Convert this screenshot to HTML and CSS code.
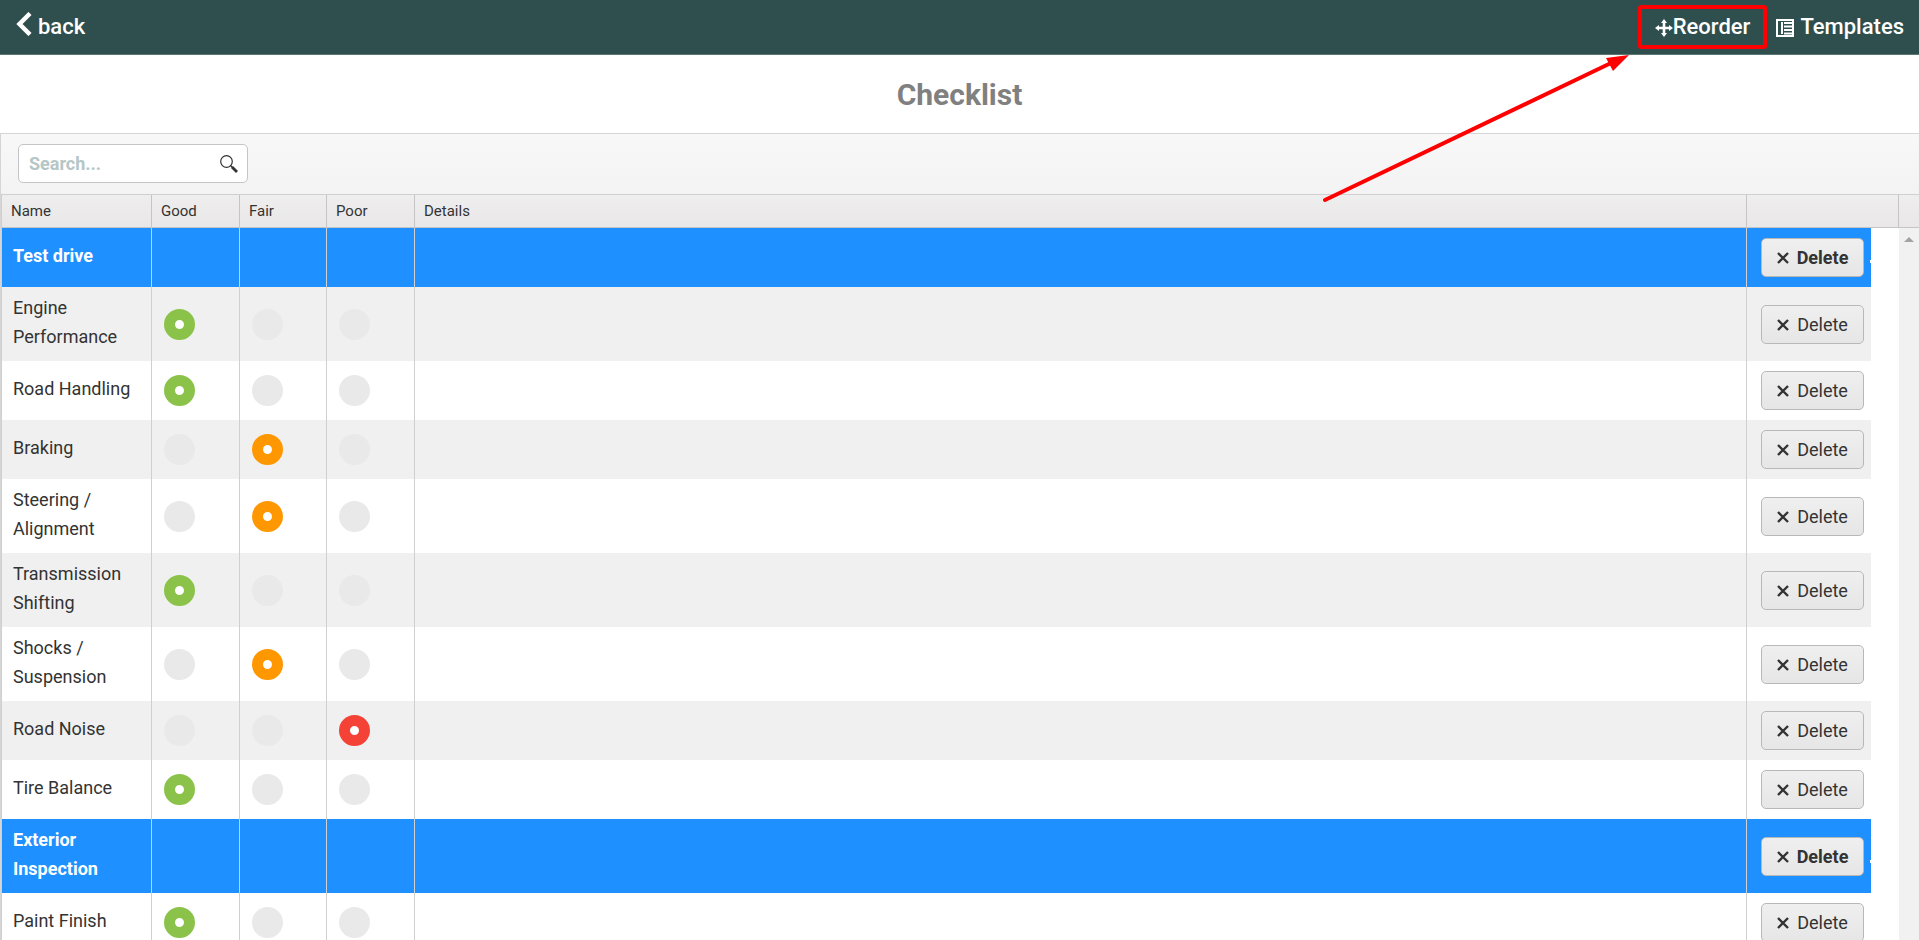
FILE: index.html
```html
<!DOCTYPE html>
<html lang="en">
<head>
    <meta charset="UTF-8">
    <meta name="viewport" content="width=device-width, initial-scale=1.0">
    <title>Checklist</title>
    <link rel="stylesheet" href="styles.css">
</head>
<body>
    <svg class="symbols" aria-hidden="true">
        <symbol id="icon-x" viewBox="0 0 12 12">
            <path d="M1 1 L11 11 M11 1 L1 11" fill="none" stroke="currentColor" stroke-width="2.4"/>
        </symbol>
    </svg>

    <header class="top-bar">
        <a href="#" class="top-link">
            <svg class="back-icon" viewBox="0 0 15 24" aria-hidden="true">
                <path d="M13.5 1.5 L3 12 L13.5 22.5" fill="none" stroke="#fff" stroke-width="4.5"/>
            </svg>
            <span>back</span>
        </a>
        <nav class="top-actions">
            <a href="#" class="top-link reorder-link">
                <svg class="move-icon" viewBox="0 0 18 18" aria-hidden="true">
                    <path d="M9 0 L12 4 H10.3 V7.7 H14 V6 L18 9 L14 12 V10.3 H10.3 V14 H12 L9 18 L6 14 H7.7 V10.3 H4 V12 L0 9 L4 6 V7.7 H7.7 V4 H6 Z" fill="#fff"/>
                </svg>
                <span>Reorder</span>
            </a>
            <a href="#" class="top-link templates-link">
                <svg class="list-icon" viewBox="0 0 18 18" aria-hidden="true">
                    <path d="M1 1 H17 V17 H1 Z" fill="none" stroke="#fff" stroke-width="2"/>
                    <path d="M6 3 V15 M8 4 H16 M8 7.5 H16 M8 11 H16 M8 14.5 H16" fill="none" stroke="#fff" stroke-width="2"/>
                </svg>
                <span>Templates</span>
            </a>
        </nav>
        <svg class="arrow" viewBox="0 0 308 150" aria-hidden="true">
            <path d="M4 147 L290 10" fill="none" stroke="#f00" stroke-width="4" stroke-linecap="round"/>
            <path d="M308 2 L285 5 L292 18 Z" fill="#f00"/>
        </svg>
    </header>

    <h1>Checklist</h1>

    <main class="grid">
        <div class="toolbar">
            <div class="search-box">
                <input type="text" class="search" placeholder="Search..." aria-label="Search">
                <svg class="search-icon" viewBox="0 0 18 18" aria-hidden="true">
                    <circle cx="6.5" cy="6.5" r="5.8" fill="none" stroke="#333" stroke-width="1.2"/>
                    <path d="M10.5 10.5 L12.5 12.5" stroke="#333" stroke-width="1.5"/>
                    <path d="M12 12 L17 17" stroke="#333" stroke-width="2.8"/>
                </svg>
            </div>
        </div>

        <div class="grid-body">
            <table>
                <colgroup>
                    <col class="col-name">
                    <col class="col-rate">
                    <col class="col-fair">
                    <col class="col-rate">
                    <col>
                    <col class="col-actions">
                    <col class="col-space">
                </colgroup>
                <thead>
                    <tr>
                        <th>Name</th>
                        <th>Good</th>
                        <th>Fair</th>
                        <th>Poor</th>
                        <th>Details</th>
                        <th colspan="2"></th>
                    </tr>
                </thead>
                <tbody>
                    <tr class="group">
                        <td class="name">Test drive</td>
                        <td></td>
                        <td></td>
                        <td></td>
                        <td></td>
                        <td class="actions"><button type="button" class="delete-btn"><svg class="x-icon"><use href="#icon-x"/></svg>Delete</button></td>
                        <td class="space"></td>
                    </tr>
                    <tr class="alt">
                        <td class="name">Engine Performance</td>
                        <td><input type="radio" class="rate good" name="engine" aria-label="Good" checked></td>
                        <td><input type="radio" class="rate fair" name="engine" aria-label="Fair"></td>
                        <td><input type="radio" class="rate poor" name="engine" aria-label="Poor"></td>
                        <td></td>
                        <td class="actions"><button type="button" class="delete-btn"><svg class="x-icon"><use href="#icon-x"/></svg>Delete</button></td>
                        <td class="space"></td>
                    </tr>
                    <tr>
                        <td class="name">Road Handling</td>
                        <td><input type="radio" class="rate good" name="handling" aria-label="Good" checked></td>
                        <td><input type="radio" class="rate fair" name="handling" aria-label="Fair"></td>
                        <td><input type="radio" class="rate poor" name="handling" aria-label="Poor"></td>
                        <td></td>
                        <td class="actions"><button type="button" class="delete-btn"><svg class="x-icon"><use href="#icon-x"/></svg>Delete</button></td>
                        <td class="space"></td>
                    </tr>
                    <tr class="alt">
                        <td class="name">Braking</td>
                        <td><input type="radio" class="rate good" name="braking" aria-label="Good"></td>
                        <td><input type="radio" class="rate fair" name="braking" aria-label="Fair" checked></td>
                        <td><input type="radio" class="rate poor" name="braking" aria-label="Poor"></td>
                        <td></td>
                        <td class="actions"><button type="button" class="delete-btn"><svg class="x-icon"><use href="#icon-x"/></svg>Delete</button></td>
                        <td class="space"></td>
                    </tr>
                    <tr>
                        <td class="name">Steering / Alignment</td>
                        <td><input type="radio" class="rate good" name="steering" aria-label="Good"></td>
                        <td><input type="radio" class="rate fair" name="steering" aria-label="Fair" checked></td>
                        <td><input type="radio" class="rate poor" name="steering" aria-label="Poor"></td>
                        <td></td>
                        <td class="actions"><button type="button" class="delete-btn"><svg class="x-icon"><use href="#icon-x"/></svg>Delete</button></td>
                        <td class="space"></td>
                    </tr>
                    <tr class="alt">
                        <td class="name">Transmission Shifting</td>
                        <td><input type="radio" class="rate good" name="transmission" aria-label="Good" checked></td>
                        <td><input type="radio" class="rate fair" name="transmission" aria-label="Fair"></td>
                        <td><input type="radio" class="rate poor" name="transmission" aria-label="Poor"></td>
                        <td></td>
                        <td class="actions"><button type="button" class="delete-btn"><svg class="x-icon"><use href="#icon-x"/></svg>Delete</button></td>
                        <td class="space"></td>
                    </tr>
                    <tr>
                        <td class="name">Shocks / Suspension</td>
                        <td><input type="radio" class="rate good" name="shocks" aria-label="Good"></td>
                        <td><input type="radio" class="rate fair" name="shocks" aria-label="Fair" checked></td>
                        <td><input type="radio" class="rate poor" name="shocks" aria-label="Poor"></td>
                        <td></td>
                        <td class="actions"><button type="button" class="delete-btn"><svg class="x-icon"><use href="#icon-x"/></svg>Delete</button></td>
                        <td class="space"></td>
                    </tr>
                    <tr class="alt">
                        <td class="name">Road Noise</td>
                        <td><input type="radio" class="rate good" name="noise" aria-label="Good"></td>
                        <td><input type="radio" class="rate fair" name="noise" aria-label="Fair"></td>
                        <td><input type="radio" class="rate poor" name="noise" aria-label="Poor" checked></td>
                        <td></td>
                        <td class="actions"><button type="button" class="delete-btn"><svg class="x-icon"><use href="#icon-x"/></svg>Delete</button></td>
                        <td class="space"></td>
                    </tr>
                    <tr>
                        <td class="name">Tire Balance</td>
                        <td><input type="radio" class="rate good" name="tire" aria-label="Good" checked></td>
                        <td><input type="radio" class="rate fair" name="tire" aria-label="Fair"></td>
                        <td><input type="radio" class="rate poor" name="tire" aria-label="Poor"></td>
                        <td></td>
                        <td class="actions"><button type="button" class="delete-btn"><svg class="x-icon"><use href="#icon-x"/></svg>Delete</button></td>
                        <td class="space"></td>
                    </tr>
                    <tr class="group">
                        <td class="name">Exterior Inspection</td>
                        <td></td>
                        <td></td>
                        <td></td>
                        <td></td>
                        <td class="actions"><button type="button" class="delete-btn"><svg class="x-icon"><use href="#icon-x"/></svg>Delete</button></td>
                        <td class="space"></td>
                    </tr>
                    <tr>
                        <td class="name">Paint Finish</td>
                        <td><input type="radio" class="rate good" name="paint" aria-label="Good" checked></td>
                        <td><input type="radio" class="rate fair" name="paint" aria-label="Fair"></td>
                        <td><input type="radio" class="rate poor" name="paint" aria-label="Poor"></td>
                        <td></td>
                        <td class="actions"><button type="button" class="delete-btn"><svg class="x-icon"><use href="#icon-x"/></svg>Delete</button></td>
                        <td class="space"></td>
                    </tr>
                </tbody>
            </table>
            <div class="scroll-side">
                <div class="scroll-head"></div>
                <div class="scroll-track">
                    <svg class="scroll-up" viewBox="0 0 10 5" aria-hidden="true"><path d="M0 5 L5 0 L10 5 Z" fill="#a3a3a3"/></svg>
                </div>
            </div>
        </div>
    </main>
</body>
</html>
```

FILE: styles.css
```css
* {
    box-sizing: border-box;
    font-family: Roboto, 'Liberation Sans', sans-serif;
}

body {
    margin: 0;
    height: 100vh;
    display: flex;
    flex-direction: column;
    overflow: hidden;
    background: #fff;
    color: #333;
}

.symbols {
    display: none;
}

/* top bar */
.top-bar {
    position: relative;
    display: flex;
    justify-content: space-between;
    align-items: center;
    flex: none;
    height: 55px;
    padding: 0 15px 0 16px;
    background: #2f4f4f;
    border-bottom: 1px solid #5d7676;
}

.top-actions {
    display: flex;
    gap: 26px;
}

.top-link {
    position: relative;
    display: flex;
    align-items: center;
    color: #fff;
    font-size: 22px;
    font-weight: 500;
    line-height: 26px;
    text-decoration: none;
}

.back-icon {
    width: 16px;
    height: 24px;
    margin: 0 6px 6px 0;
}

.move-icon {
    width: 18px;
    height: 18px;
    margin-top: 2px;
}

.list-icon {
    width: 18px;
    height: 18px;
    margin: 2px 6px 0 0;
}

.reorder-link::after {
    content: '';
    position: absolute;
    top: -9px;
    bottom: -9px;
    left: -17px;
    right: -17px;
    border: 4px solid #f00;
    border-radius: 3px;
}

.arrow {
    position: absolute;
    top: 53px;
    right: 290px;
    width: 308px;
    height: 150px;
}

h1 {
    flex: none;
    margin: 0;
    padding: 22px 0 20px;
    color: #808080;
    font-size: 30px;
    font-weight: 700;
    line-height: 36px;
    text-align: center;
}

/* grid */
.grid {
    flex: 1;
    min-height: 0;
    display: flex;
    flex-direction: column;
    border-top: 1px solid #d5d5d5;
    border-left: 1px solid #d5d5d5;
}

.toolbar {
    flex: none;
    padding: 10px 17px 11px;
    background: linear-gradient(#f8f8f8, #f3f3f3);
    border-bottom: 1px solid #d0d0d0;
}

.search-box {
    position: relative;
    width: 230px;
}

.search {
    display: block;
    width: 100%;
    height: 39px;
    padding: 0 36px 0 10px;
    border: 1px solid #c5c5c5;
    border-radius: 5px;
    background: #fff;
    color: #333;
    font-size: 18px;
    font-weight: 700;
}

.search::placeholder {
    color: #b5c6c6;
}

.search-icon {
    position: absolute;
    top: 11px;
    right: 10px;
    width: 18px;
    height: 18px;
}

.grid-body {
    flex: 1;
    min-height: 0;
    display: flex;
    overflow: hidden;
    border-left: 1px solid #d0d0d0;
}

table {
    flex: 1;
    align-self: flex-start;
    table-layout: fixed;
    border-collapse: separate;
    border-spacing: 0;
}

.col-name {
    width: 150px;
}

.col-rate {
    width: 88px;
}

.col-fair {
    width: 87px;
}

.col-actions {
    width: 124px;
}

.col-space {
    width: 28px;
}

th {
    height: 33px;
    padding: 0 9px;
    background: linear-gradient(#efeeee, #e9e7e8);
    border-right: 1px solid #c5c5c5;
    border-bottom: 1px solid #c5c5c5;
    font-size: 15px;
    font-weight: 400;
    text-align: left;
}

td {
    height: 59px;
    padding: 0 12px;
    border-right: 1px solid #d0d0d0;
    font-size: 18px;
    line-height: 29px;
}

.name {
    padding: 6px 11px 10px;
}

.alt td {
    background: #f0f0f0;
}

.group td {
    background: #1e90ff;
    color: #fff;
    font-weight: 700;
}

td.actions {
    position: relative;
    padding: 0 7px 0 14px;
    border-right: none;
}

/* cut-off end of the cell text */
.group .actions::after {
    content: '';
    position: absolute;
    right: 0;
    top: 55%;
    width: 1px;
    height: 3px;
    background: #fff;
}

tr td.space {
    background: #fff;
    border-right: none;
}

.rate {
    appearance: none;
    display: block;
    width: 31px;
    height: 31px;
    margin: 0;
    border-radius: 50%;
    background: #e9e9e9;
}

.rate:checked {
    border: 11px solid;
    background: #fff;
}

.good:checked {
    border-color: #8bc34a;
}

.fair:checked {
    border-color: #ff9800;
}

.poor:checked {
    border-color: #f44336;
}

.delete-btn {
    display: flex;
    align-items: center;
    justify-content: center;
    gap: 8px;
    width: 100%;
    height: 39px;
    padding: 0;
    border: 1px solid #b8b8b8;
    border-radius: 5px;
    background: linear-gradient(#efefef, #e6e6e6);
    color: #333;
    font-size: 18px;
    font-weight: 400;
    cursor: pointer;
}

.group .delete-btn {
    font-weight: 700;
}

.x-icon {
    width: 12px;
    height: 12px;
    margin-top: 1px;
}

.scroll-side {
    flex: none;
    display: flex;
    flex-direction: column;
    width: 20px;
}

.scroll-head {
    height: 33px;
    background: linear-gradient(#efeeee, #e9e7e8);
    border-bottom: 1px solid #c5c5c5;
}

.scroll-track {
    flex: 1;
    padding-top: 9px;
    background: #f1f1f1;
}

.scroll-up {
    display: block;
    width: 10px;
    height: 5px;
    margin: 0 auto;
}
```
